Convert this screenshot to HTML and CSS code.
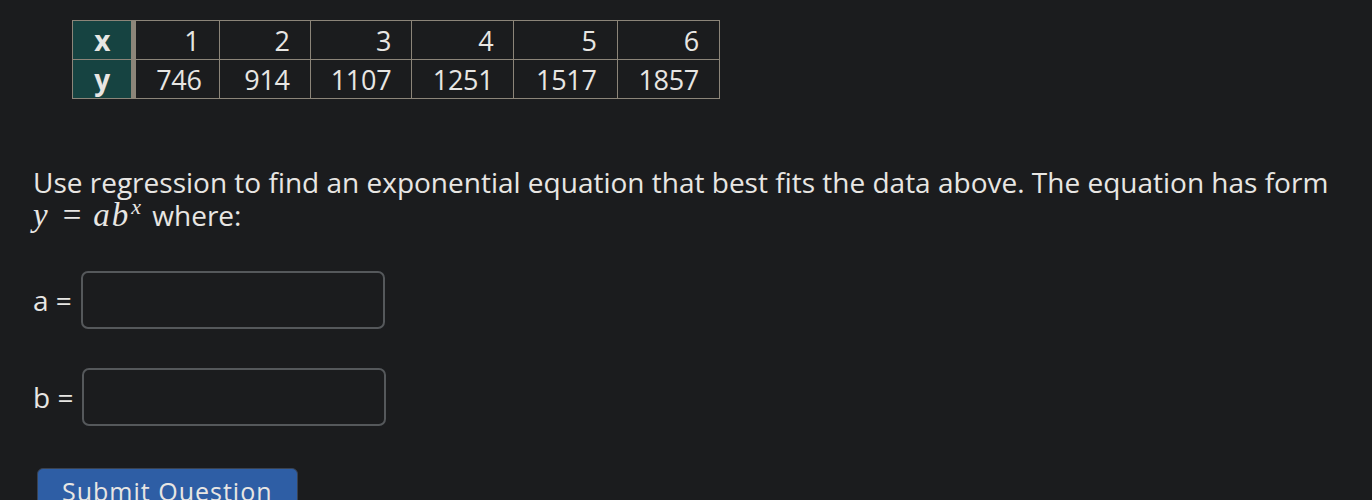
FILE: index.html
```html
<!DOCTYPE html>
<html>
<head>
<meta charset="utf-8">
<link rel="stylesheet" href="styles.css">
</head>
<body>
<div class="page">
  <table class="data">
    <colgroup>
      <col class="c-head"><col class="c1"><col class="c2"><col class="c3"><col class="c4"><col class="c5"><col class="c6">
    </colgroup>
    <tr>
      <th>x</th><td>1</td><td>2</td><td>3</td><td>4</td><td>5</td><td>6</td>
    </tr>
    <tr>
      <th>y</th><td>746</td><td>914</td><td>1107</td><td>1251</td><td>1517</td><td>1857</td>
    </tr>
  </table>
  <p class="question">Use regression to find an exponential equation that best fits the data above. The equation has form <span class="math"><i>y</i><span class="eq">=</span><i>ab</i><sup><i>x</i></sup></span> where:</p>
  <div class="field"><span class="label">a =</span><input class="box" type="text"></div>
  <div class="field"><span class="label">b =</span><input class="box" type="text"></div>
  <button class="submit">Submit Question</button>
</div>
</body>
</html>
```
FILE: styles.css
```css
html, body {
  margin: 0;
  padding: 0;
  background: #1b1c1e;
  color: #e8e6e3;
  font-family: "Open Sans", "Noto Sans", sans-serif;
}
.page {
  padding: 20px 0 0 33px;
}
.data {
  margin-left: 39px;
  border-collapse: collapse;
  border: 1px solid #8c8579;
  font-size: 27px;
  letter-spacing: -0.3px;
  table-layout: fixed;
  width: 648px;
}
.c-head { width: 61px; }
.c1 { width: 86px; }
.c2 { width: 90px; }
.c3 { width: 101px; }
.c4 { width: 102px; }
.c5 { width: 103px; }
.c6 { width: 102px; }
.data th, .data td {
  border: 1px solid #8c8579;
  height: 38px;
  padding: 0 20px;
  text-align: right;
  font-weight: normal;
}
.data th {
  background: #164341;
  border-right: 5px solid #8c8579;
  font-weight: bold;
  font-size: 28px;
  text-align: center;
  padding: 0;
}
.question {
  margin: 67px 0 0 0;
  font-size: 28px;
  line-height: 33px;
}
.math {
  font-family: "Liberation Serif", serif;
  font-size: 33px;
  letter-spacing: 2px;
}
.math .eq {
  font-style: normal;
  margin: 0 10px 0 13px;
}
.math sup {
  font-size: 22px;
  line-height: 0;
  letter-spacing: 0;
  vertical-align: 12px;
  margin-left: 1px;
  margin-right: 4px;
}
.field {
  display: flex;
  align-items: center;
  gap: 9px;
  margin-top: 39px;
}
.label {
  font-size: 28px;
}
.box {
  width: 304px;
  height: 58px;
  box-sizing: border-box;
  border: 2px solid #55585b;
  border-radius: 7px;
  background: #1b1c1e;
  margin: 0;
}
.submit {
  display: block;
  margin: 42px 0 0 4px;
  width: 261px;
  height: 50px;
  background: #2e5ea5;
  color: #e8e6e3;
  border: 1px solid #3a4250;
  border-radius: 6px;
  font-family: inherit;
  font-size: 25px;
  letter-spacing: 1px;
  line-height: 34px;
  padding: 0 0 5px 24px;
  text-align: left;
  white-space: nowrap;
}
```
